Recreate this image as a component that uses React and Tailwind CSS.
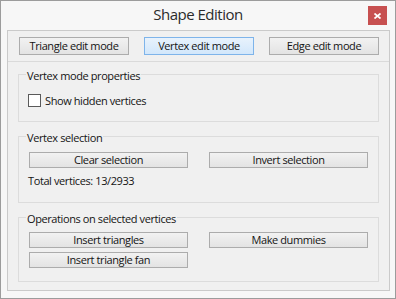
import React from 'react';

const Btn = ({ children, active, tall }) => (
  <button
    className={
      (tall ? 'h-[18px] w-[110px] ' : 'h-[16px] w-full ') +
      (active
        ? 'border border-[#7eb4ea] bg-linear-to-b from-[#e8f2fc] to-[#d2e7fb] '
        : 'border border-[#acacac] bg-linear-to-b from-[#f2f2f2] to-[#e3e3e3] ') +
      'flex items-center justify-center text-[#141414]'
    }
  >
    {children}
  </button>
);

const Group = ({ title, height, children }) => (
  <div className={'mx-[10px] border border-[#dcdcdc] flex flex-col ' + height}>
    <div className="-mt-[6px] ml-[7px] w-fit bg-[#f0f0f0] px-[1px] text-[#141414]">{title}</div>
    {children}
  </div>
);

const App = () => {
  return (
    <div className="w-[396px] h-[299px] border border-[#9c9c9c] bg-[#f7f7f7] flex flex-col font-['Open_Sans',sans-serif] text-[11px] leading-[14px] tracking-[-0.4px]">
      <div className="h-[29px] grid grid-cols-3">
        <div />
        <div className="pt-[3px] text-center text-[15px] leading-[20px] tracking-[-0.5px] text-[#2b2b2b]">Shape Edition</div>
        <div className="flex justify-end pt-[5px] pr-[8px]">
          <div className="w-[19px] h-[19px] bg-[#c75050] flex items-center justify-center">
            <svg width="7" height="6" viewBox="0 0 7 6">
              <path d="M0.5 0.5 L6.5 5.5 M6.5 0.5 L0.5 5.5" stroke="white" strokeWidth="1.7" />
            </svg>
          </div>
        </div>
      </div>

      <div className="ml-[6px] w-[383px] h-[261px] border border-[#cacaca] bg-[#f0f0f0] flex flex-col">
        <div className="h-[31px] border-b border-[#dadada] pt-[6px] pl-[11px] flex gap-[15px]">
          <Btn tall>Triangle edit mode</Btn>
          <Btn tall active>Vertex edit mode</Btn>
          <Btn tall>Edge edit mode</Btn>
        </div>

        <div className="mt-[12px]">
          <Group title="Vertex mode properties" height="h-[48px]">
            <label className="mt-[11px] ml-[9px] h-[13px] flex items-center gap-[4px] text-[#141414]">
              <span className="w-[13px] h-[13px] border border-[#5a5a5a] bg-white" />
              Show hidden vertices
            </label>
          </Group>
        </div>

        <div className="mt-[14px]">
          <Group title="Vertex selection" height="h-[67px]">
            <div className="mt-[7px] px-[10px] grid grid-cols-2 gap-x-[21px]">
              <Btn>Clear selection</Btn>
              <Btn>Invert selection</Btn>
            </div>
            <div className="mt-[6px] ml-[9px] text-[#141414]">Total vertices: 13/2933</div>
          </Group>
        </div>

        <div className="mt-[14px]">
          <Group title="Operations on selected vertices" height="h-[65px]">
            <div className="mt-[6px] px-[10px] grid grid-cols-2 gap-x-[21px] gap-y-[4px]">
              <Btn>Insert triangles</Btn>
              <Btn>Make dummies</Btn>
              <Btn>Insert triangle fan</Btn>
            </div>
          </Group>
        </div>
      </div>
    </div>
  );
};

export default App;
